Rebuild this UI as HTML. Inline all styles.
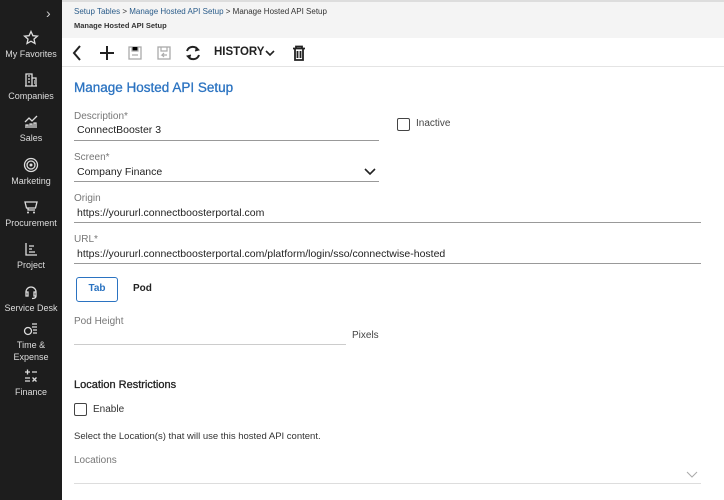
<!DOCTYPE html>
<html><head><style>
*{margin:0;padding:0;box-sizing:border-box}
body{width:724px;height:500px;overflow:hidden;background:#fff;font-family:"Liberation Sans",sans-serif;position:relative;color:#222}
.a{position:absolute;white-space:nowrap}
#side{position:absolute;left:0;top:0;width:62px;height:500px;background:#1d1d1d;color:#ddd}
.ni{position:absolute;left:0;width:62px;text-align:center;font-size:9px;color:#ddd}
.ni svg{display:block;margin:0 auto 3px}
.lbl{font-size:10px;color:#777}
.val{font-size:10.5px;color:#222}
.ul{position:absolute;height:1px;background:#999}
.cb{position:absolute;width:13px;height:13px;border:1.5px solid #444;border-radius:2px}
</style></head><body>
<div id="side">
 <div class="a" style="left:46px;top:5px;color:#ccc;font-size:14px">&#x203A;</div>
 <div class="ni" style="top:30px"><svg width="16" height="16" viewBox="0 0 16 16"><path d="M8 1.5l1.9 4.2 4.5.4-3.4 3 1 4.4L8 11.2 4 13.5l1-4.4-3.4-3 4.5-.4z" fill="none" stroke="#ddd" stroke-width="1.3"/></svg>My Favorites</div>
 <div class="ni" style="top:72px"><svg width="16" height="16" viewBox="0 0 16 16"><path d="M3 14V2h6v12M9 6h4v8M2 14h12M5 4h2M5 7h2M5 10h2M11 9h1M11 11h1" fill="none" stroke="#ddd" stroke-width="1.3"/></svg>Companies</div>
 <div class="ni" style="top:114px"><svg width="16" height="16" viewBox="0 0 16 16"><path d="M2 8l4-4 3 3 5-5M3 14v-3h2v3M7 14v-4h2v4M11 14v-5h2v5" fill="none" stroke="#ddd" stroke-width="1.3"/></svg>Sales</div>
 <div class="ni" style="top:157px"><svg width="16" height="16" viewBox="0 0 16 16"><circle cx="8" cy="8" r="6.5" fill="none" stroke="#ddd" stroke-width="1.3"/><circle cx="8" cy="8" r="4" fill="none" stroke="#ddd" stroke-width="1.3"/><circle cx="8" cy="8" r="1.5" fill="#ddd"/></svg>Marketing</div>
 <div class="ni" style="top:199px"><svg width="16" height="16" viewBox="0 0 16 16"><path d="M2 3h12l-1.5 6h-9zM5 9v2h7" fill="none" stroke="#ddd" stroke-width="1.3"/><circle cx="5" cy="13.5" r="1" fill="#ddd"/><circle cx="11" cy="13.5" r="1" fill="#ddd"/></svg>Procurement</div>
 <div class="ni" style="top:241px"><svg width="16" height="16" viewBox="0 0 16 16"><path d="M3 2v12h11M6 5h5M6 8h3M6 11h6" fill="none" stroke="#ddd" stroke-width="1.3"/></svg>Project</div>
 <div class="ni" style="top:284px"><svg width="16" height="16" viewBox="0 0 16 16"><path d="M3 10V8a5 5 0 0110 0v2M3 8h2v4H3zM11 8h2v4h-2zM13 12c0 2-2 2.5-4 2.5" fill="none" stroke="#ddd" stroke-width="1.3"/></svg>Service Desk</div>
 <div class="ni" style="top:322px;line-height:12px"><svg width="16" height="14" viewBox="0 0 16 14"><circle cx="5" cy="9" r="3.5" fill="none" stroke="#ddd" stroke-width="1.3"/><path d="M9 2h5M9 5h5M10 8h4M10 11h4" stroke="#ddd" stroke-width="1.3"/></svg>Time &amp;<br>Expense</div>
 <div class="ni" style="top:368px"><svg width="16" height="16" viewBox="0 0 16 16"><path d="M2 4h5M4.5 1.5v5M9 4h5M2 10h5M2 13h5M9.5 9.5l4 4M13.5 9.5l-4 4" stroke="#ddd" stroke-width="1.3"/></svg>Finance</div>
</div>
<div class="a" style="left:62px;top:0;width:662px;height:38px;background:#f4f4f4;border-top:2px solid #ddd"></div>
<div class="a" style="left:74px;top:7px;font-size:8px;color:#2a5c8a">Setup Tables <span style="color:#333">&gt;</span> Manage Hosted API Setup <span style="color:#333">&gt;</span> <span style="color:#333">Manage Hosted API Setup</span></div>
<div class="a" style="left:74px;top:21px;font-size:7.5px;font-weight:bold;color:#333">Manage Hosted API Setup</div>
<div class="a" style="left:62px;top:66px;width:662px;height:1px;background:#e4e4e4"></div>
<svg class="a" style="left:70px;top:44px" width="240" height="18" viewBox="0 0 240 18">
 <path d="M10 2L4 9l6 7" fill="none" stroke="#222" stroke-width="2"/>
 <path d="M37 2v14M30 9h14" stroke="#222" stroke-width="2"/>
 <rect x="59" y="3" width="12" height="12" fill="none" stroke="#aaa" stroke-width="1.3"/><path d="M62 3v4h6V3M62 11h6" stroke="#aaa" stroke-width="1.2"/>
 <rect x="88" y="3" width="12" height="12" fill="none" stroke="#aaa" stroke-width="1.3"/><path d="M91 3v4h6V3M97 11h-5l2-2M92 11l2 2" stroke="#aaa" stroke-width="1.2" fill="none"/>
 <path d="M117 7a6 6 0 0111-1M129 11a6 6 0 01-11 1" fill="none" stroke="#222" stroke-width="2"/><path d="M126 3l3 3-4 1M120 15l-3-3 4-1" fill="#222" stroke="#222" stroke-width="1"/>
 <path d="M226 4.5v-2h6v2M223 4.5h12M225 5v11h8V5M227.5 7v7M230.5 7v7" fill="none" stroke="#222" stroke-width="1.8"/>
</svg>
<div class="a" style="left:214px;top:46px;font-size:11.5px;font-weight:bold;color:#222">HISTORY</div>
<svg class="a" style="left:265px;top:49px" width="10" height="8"><path d="M1 2l4 4 4-4" fill="none" stroke="#222" stroke-width="1.6"/></svg>
<div class="a" style="left:74px;top:80px;font-size:13.5px;color:#2b73c1;-webkit-text-stroke:0.3px #2b73c1">Manage Hosted API Setup</div>
<div class="a lbl" style="left:74px;top:111px">Description*</div>
<div class="a val" style="left:77px;top:124px">ConnectBooster 3</div>
<div class="ul" style="left:74px;top:140px;width:305px"></div>
<div class="cb" style="left:397px;top:118px"></div>
<div class="a" style="left:416px;top:118px;font-size:10px;color:#444">Inactive</div>
<div class="a lbl" style="left:74px;top:152px">Screen*</div>
<div class="a val" style="left:77px;top:166px">Company Finance</div>
<svg class="a" style="left:364px;top:167px" width="12" height="9"><path d="M1 2l5 5 5-5" fill="none" stroke="#222" stroke-width="1.6"/></svg>
<div class="ul" style="left:74px;top:181px;width:305px"></div>
<div class="a lbl" style="left:74px;top:193px">Origin</div>
<div class="a val" style="left:77px;top:207px">https://yoururl.connectboosterportal.com</div>
<div class="ul" style="left:74px;top:222px;width:627px"></div>
<div class="a lbl" style="left:74px;top:234px">URL*</div>
<div class="a val" style="left:77px;top:248px">https://yoururl.connectboosterportal.com/platform/login/sso/connectwise-hosted</div>
<div class="ul" style="left:74px;top:263px;width:627px"></div>
<div class="a" style="left:76px;top:277px;width:42px;height:25px;border:1.5px solid #2b73c1;border-radius:3px;font-size:10px;color:#2b73c1;font-weight:bold;text-align:center;line-height:22px">Tab</div>
<div class="a" style="left:133px;top:283px;font-size:10px;color:#222;font-weight:bold">Pod</div>
<div class="a lbl" style="left:74px;top:316px">Pod Height</div>
<div class="ul" style="left:74px;top:344px;width:272px;background:#ccc"></div>
<div class="a" style="left:352px;top:330px;font-size:10px;color:#444">Pixels</div>
<div class="a" style="left:74px;top:379px;font-size:11px;color:#222;-webkit-text-stroke:0.3px #222">Location Restrictions</div>
<div class="cb" style="left:74px;top:403px"></div>
<div class="a" style="left:93px;top:404px;font-size:10px;color:#333">Enable</div>
<div class="a" style="left:74px;top:431px;font-size:9.5px;color:#333">Select the Location(s) that will use this hosted API content.</div>
<div class="a lbl" style="left:74px;top:455px">Locations</div>
<svg class="a" style="left:686px;top:471px" width="12" height="8"><path d="M1 1l5 5 5-5" fill="none" stroke="#aaa" stroke-width="1"/></svg>
<div class="ul" style="left:74px;top:483px;width:627px;background:#ddd"></div>
</body></html>
